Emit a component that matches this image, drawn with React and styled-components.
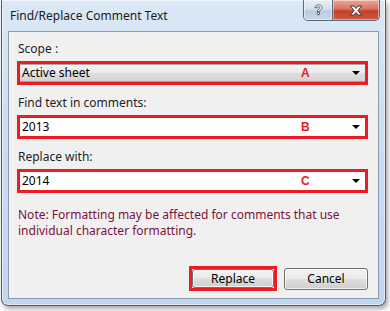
import React from 'react';
import styled, { createGlobalStyle } from 'styled-components';

const GlobalStyle = createGlobalStyle`
  html, body {
    margin: 0;
    background: #ffffff;
  }
  * {
    box-sizing: border-box;
  }
`;

const Page = styled.div`
  width: 390px;
  height: 311px;
  padding-left: 1px;
  overflow: hidden;
  background: #ffffff;
  font-family: 'Noto Sans', 'Open Sans', sans-serif;
  font-size: 12px;
  color: #1e1e1e;
`;

const Window = styled.div`
  width: 385px;
  height: 306px;
  display: flex;
  flex-direction: column;
  border: 1px solid #4c5a6a;
  border-top: none;
  border-radius: 0 0 7px 7px;
  background: linear-gradient(180deg, #dbe8f6 0%, #cde0f3 35%, #bfd6ef 100%);
  box-shadow: inset 0 0 0 1px rgba(255, 255, 255, 0.55), 2px 3px 5px rgba(0, 0, 0, 0.35);
`;

const TitleBar = styled.div`
  height: 31px;
  flex-shrink: 0;
  display: flex;
  align-items: flex-start;
`;

const Title = styled.div`
  margin-top: 8px;
  padding-left: 8px;
  line-height: 16px;
  color: #1a1a1a;
`;

const CaptionGroup = styled.div`
  margin-left: auto;
  margin-right: 5px;
  display: flex;
  height: 21px;
  border: 1px solid #5b6879;
  border-top: none;
  border-radius: 0 0 5px 5px;
  overflow: hidden;
`;

const CaptionButton = styled.div`
  width: ${(p) => p.$w}px;
  height: 100%;
  display: flex;
  align-items: center;
  justify-content: center;
  background: ${(p) =>
    p.$close
      ? 'linear-gradient(180deg, #e9a99b 0%, #d9725f 45%, #c2402b 55%, #cf5a40 100%)'
      : 'linear-gradient(180deg, #e8eef6 0%, #d3dfed 45%, #bccbdf 55%, #c9d7e8 100%)'};
  border-left: ${(p) => (p.$close ? '1px solid #5b6879' : 'none')};
  box-shadow: inset 0 0 0 1px rgba(255, 255, 255, 0.45);
`;

const HelpIcon = () => (
  <svg width="9" height="12" viewBox="0 0 9 12">
    <path
      d="M1 3.6 C1 1.8 2.5 0.8 4.5 0.8 C6.6 0.8 8 1.9 8 3.5 C8 4.9 7 5.5 6 6.1 C5.5 6.4 5.4 6.7 5.4 7.4 H3.4 C3.4 6.2 3.7 5.6 4.6 5 C5.4 4.5 5.8 4.2 5.8 3.6 C5.8 3 5.3 2.6 4.5 2.6 C3.6 2.6 3.1 3.1 3.1 3.8 Z M3.3 8.4 H5.5 V10.6 H3.3 Z"
      fill="#ffffff"
      stroke="#3b4656"
      strokeWidth="0.8"
      strokeLinejoin="round"
    />
  </svg>
);

const Client = styled.div`
  flex: 1;
  margin: 0 6px 6px;
  border: 1px solid #8b9aae;
  background: #f0f0f0;
  padding: 9px 10px 7px 8px;
  display: flex;
  flex-direction: column;
`;

const Fields = styled.div`
  display: flex;
  flex-direction: column;
  gap: 10px;
`;

const Field = styled.div`
  display: flex;
  flex-direction: column;
  gap: 4px;
`;

const Label = styled.div`
  padding-left: 1px;
  line-height: 16px;
`;

const RedFrame = styled.div`
  position: relative;
  width: ${(p) => p.$w || 'auto'};
  height: ${(p) => p.$h || 24}px;
  border: 3px solid #ec1c24;
`;

const Combo = styled.div`
  height: 100%;
  display: flex;
  align-items: center;
  padding: 0 5px 0 2px;
  color: #000000;
  background: ${(p) =>
    p.$readonly
      ? 'linear-gradient(180deg, #f3f3f3 0%, #ebebeb 48%, #dddddd 52%, #d2d2d2 100%)'
      : '#ffffff'};
  box-shadow: ${(p) => (p.$readonly ? 'inset 0 1px 0 #a8a8a8, inset 0 -1px 0 #9a9a9a' : 'none')};
`;

const ComboText = styled.span`
  flex: 1;
  line-height: 16px;
`;

const Arrow = styled.span`
  width: 0;
  height: 0;
  border-left: 4px solid transparent;
  border-right: 4px solid transparent;
  border-top: 4px solid #000000;
`;

const Marker = styled.span`
  position: absolute;
  left: 281px;
  top: 50%;
  transform: translateY(-50%);
  font-family: 'Liberation Sans', Arial, sans-serif;
  font-weight: bold;
  font-size: 12px;
  line-height: 1;
  color: #ec1c24;
`;

const Note = styled.div`
  margin-top: 14px;
  padding-left: 1px;
  line-height: 16px;
  color: #7d1238;
`;

const ButtonRow = styled.div`
  margin-top: auto;
  display: flex;
  justify-content: flex-end;
  align-items: center;
  gap: 7px;
`;

const Button = styled.div`
  width: ${(p) => p.$w}px;
  height: ${(p) => p.$h}px;
  display: flex;
  align-items: center;
  justify-content: center;
  border: 1px solid #707070;
  border-radius: 3px;
  color: #000000;
  background: linear-gradient(180deg, #f2f2f2 0%, #ebebeb 48%, #dddddd 52%, #cfcfcf 100%);
  box-shadow: inset 0 0 0 1px rgba(255, 255, 255, 0.7);
`;

const CloseIcon = () => (
  <svg width="14" height="11" viewBox="0 0 14 11">
    <path
      d="M1.5 1 H5 L7 3.6 L9 1 H12.5 L8.9 5.5 L12.5 10 H9 L7 7.4 L5 10 H1.5 L5.1 5.5 Z"
      fill="#ffffff"
      stroke="#3a2a2a"
      strokeWidth="0.9"
      strokeLinejoin="round"
    />
  </svg>
);

const fields = [
  { label: 'Scope :', value: 'Active sheet', marker: 'A', readonly: true },
  { label: 'Find text in comments:', value: '2013', marker: 'B' },
  { label: 'Replace with:', value: '2014', marker: 'C' },
];

export default function App() {
  return (
    <Page>
      <GlobalStyle />
      <Window>
        <TitleBar>
          <Title>Find/Replace Comment Text</Title>
          <CaptionGroup>
            <CaptionButton $w={28}>
              <HelpIcon />
            </CaptionButton>
            <CaptionButton $w={47} $close>
              <CloseIcon />
            </CaptionButton>
          </CaptionGroup>
        </TitleBar>
        <Client>
          <Fields>
            {fields.map((f) => (
              <Field key={f.marker}>
                <Label>{f.label}</Label>
                <RedFrame>
                  <Combo $readonly={f.readonly}>
                    <ComboText>{f.value}</ComboText>
                    <Arrow />
                  </Combo>
                  <Marker>{f.marker}</Marker>
                </RedFrame>
              </Field>
            ))}
          </Fields>
          <Note>
            Note: Formatting may be affected for comments that use
            <br />
            individual character formatting.
          </Note>
          <ButtonRow>
            <RedFrame $w="88px" $h={25}>
              <Button $w={82} $h={19}>Replace</Button>
            </RedFrame>
            <Button $w={84} $h={22}>Cancel</Button>
          </ButtonRow>
        </Client>
      </Window>
    </Page>
  );
}
